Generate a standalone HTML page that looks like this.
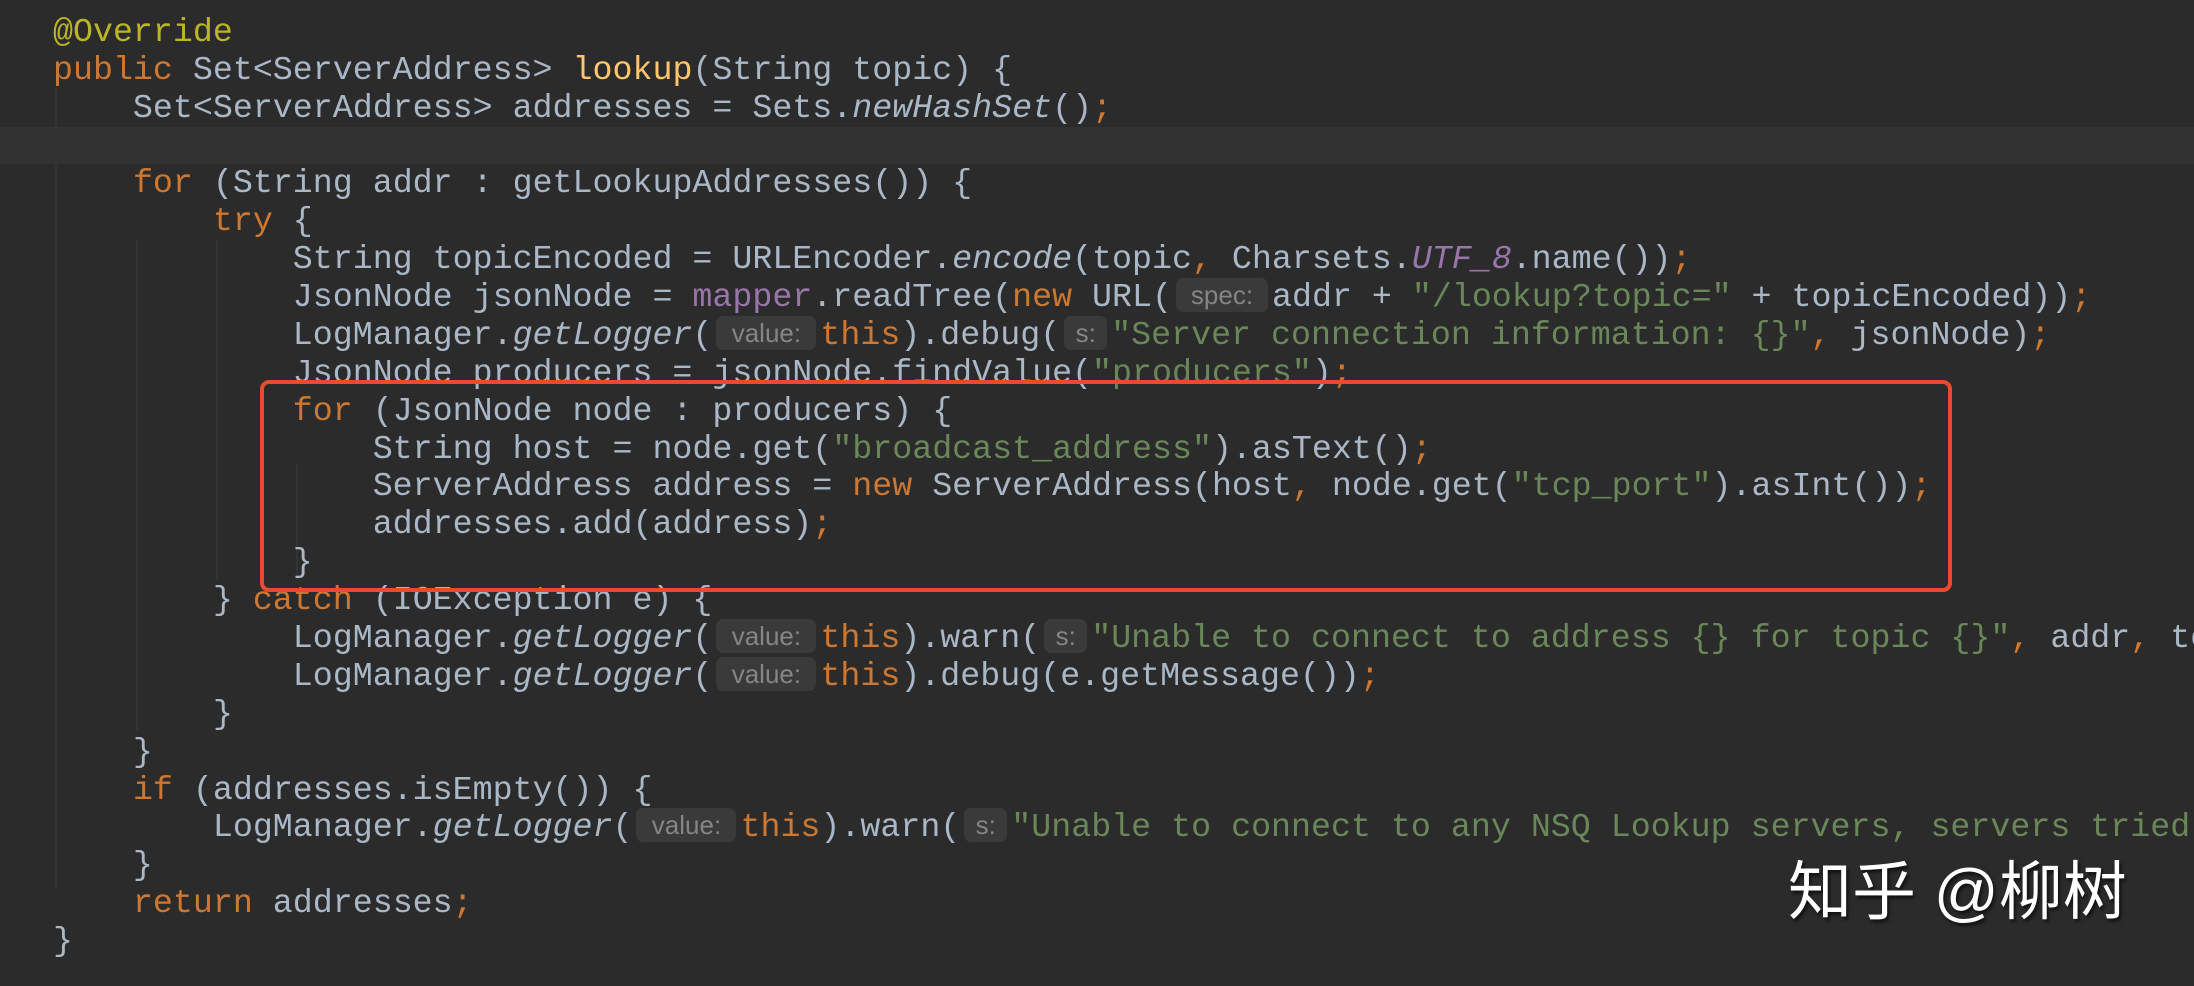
<!DOCTYPE html>
<html><head><meta charset="utf-8"><style>
html,body{margin:0;padding:0;background:#2b2b2b;width:2194px;height:986px;overflow:hidden;position:relative}
.l{position:absolute;left:53px;width:2141px;overflow:hidden;height:38px;line-height:38px;white-space:pre;font-family:"Liberation Mono",monospace;font-size:33.3px;color:#a9b7c6}
.k{color:#cc7832}.s{color:#6a8759}.p{color:#9876aa}.m{color:#ffc66d}.a{color:#bbb529}.i{font-style:italic}
.h{display:inline-block;font-family:"Liberation Sans",sans-serif;font-size:26px;color:#858585;background:#3a3a3a;border-radius:7px;height:34px;line-height:34px;vertical-align:middle;margin:0 4px;text-align:center;position:relative;top:-2px}
.g{position:absolute;width:2px;background:#333333}
</style></head><body>
<div style="position:absolute;left:0;top:127px;width:2194px;height:37px;background:#323232"></div>
<div class="g" style="left:55px;top:88px;height:800px"></div>
<div class="g" style="left:136px;top:240px;height:490px"></div>
<div class="g" style="left:216px;top:240px;height:340px"></div>
<div class="g" style="left:296px;top:465px;height:115px"></div>

<div class="l" style="top:13px"><span class="a">@Override</span></div>
<div class="l" style="top:51px"><span class="k">public</span> Set&lt;ServerAddress&gt; <span class="m">lookup</span>(String topic) {</div>
<div class="l" style="top:89px">    Set&lt;ServerAddress&gt; addresses = Sets.<span class="i">newHashSet</span>()<span class="k">;</span></div>
<div class="l" style="top:164px">    <span class="k">for</span> (String addr : getLookupAddresses()) {</div>
<div class="l" style="top:202px">        <span class="k">try</span> {</div>
<div class="l" style="top:240px">            String topicEncoded = URLEncoder.<span class="i">encode</span>(topic<span class="k">,</span> Charsets.<span class="p i">UTF_8</span>.name())<span class="k">;</span></div>
<div class="l" style="top:278px">            JsonNode jsonNode = <span class="p">mapper</span>.readTree(<span class="k">new</span> URL(<span class="h" style="width:92px">spec:</span>addr + <span class="s">"/lookup?topic="</span> + topicEncoded))<span class="k">;</span></div>
<div class="l" style="top:316px">            LogManager.<span class="i">getLogger</span>(<span class="h" style="width:100px">value:</span><span class="k">this</span>).debug(<span class="h" style="width:43px">s:</span><span class="s">"Server connection information: {}"</span><span class="k">,</span> jsonNode)<span class="k">;</span></div>
<div class="l" style="top:354px">            JsonNode producers = jsonNode.findValue(<span class="s">"producers"</span>)<span class="k">;</span></div>
<div class="l" style="top:392px">            <span class="k">for</span> (JsonNode node : producers) {</div>
<div class="l" style="top:430px">                String host = node.get(<span class="s">"broadcast_address"</span>).asText()<span class="k">;</span></div>
<div class="l" style="top:467px">                ServerAddress address = <span class="k">new</span> ServerAddress(host<span class="k">,</span> node.get(<span class="s">"tcp_port"</span>).asInt())<span class="k">;</span></div>
<div class="l" style="top:505px">                addresses.add(address)<span class="k">;</span></div>
<div class="l" style="top:543px">            }</div>
<div class="l" style="top:581px">        } <span class="k">catch</span> (IOException e) {</div>
<div class="l" style="top:619px">            LogManager.<span class="i">getLogger</span>(<span class="h" style="width:100px">value:</span><span class="k">this</span>).warn(<span class="h" style="width:43px">s:</span><span class="s">"Unable to connect to address {} for topic {}"</span><span class="k">,</span> addr<span class="k">,</span> topic)<span class="k">;</span></div>
<div class="l" style="top:657px">            LogManager.<span class="i">getLogger</span>(<span class="h" style="width:100px">value:</span><span class="k">this</span>).debug(e.getMessage())<span class="k">;</span></div>
<div class="l" style="top:695px">        }</div>
<div class="l" style="top:733px">    }</div>
<div class="l" style="top:771px">    <span class="k">if</span> (addresses.isEmpty()) {</div>
<div class="l" style="top:808px">        LogManager.<span class="i">getLogger</span>(<span class="h" style="width:100px">value:</span><span class="k">this</span>).warn(<span class="h" style="width:43px">s:</span><span class="s">"Unable to connect to any NSQ Lookup servers, servers tried: {}"</span>)<span class="k">;</span></div>
<div class="l" style="top:846px">    }</div>
<div class="l" style="top:884px">    <span class="k">return</span> addresses<span class="k">;</span></div>
<div class="l" style="top:922px">}</div>

<div style="position:absolute;left:260px;top:380px;width:1684px;height:204px;border:4px solid #ec4a2c;border-radius:9px"></div>

<div style="position:absolute;left:1788px;top:852px;font-family:'Liberation Sans','Noto Sans CJK SC',sans-serif;font-size:64px;line-height:80px;color:#fff;white-space:pre;text-shadow:2px 3px 3px rgba(0,0,0,.6)">知乎 @柳树</div>
</body></html>
